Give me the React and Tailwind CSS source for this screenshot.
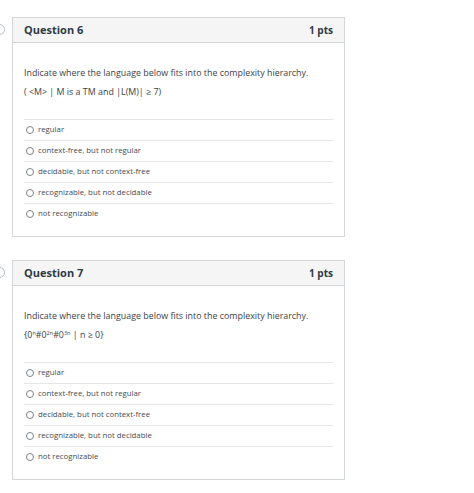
const options = [
  'regular',
  'context-free, but not regular',
  'decidable, but not context-free',
  'recognizable, but not decidable',
  'not recognizable',
]

function QuestionCard({ number, formula }) {
  return (
    <div className="relative">
      <span className="absolute -left-[18px] top-[7px] w-[11px] h-[11px] rounded-full border border-[#b8bec2] bg-white" />
      <div className="border border-[#d3d7da] bg-white">
        <div className="h-[25px] px-[11px] flex items-center justify-between bg-[#f5f5f5] border-b border-[#d3d7da]">
          <span className="text-[11px] font-bold text-[#2d3b45]">Question {number}</span>
          <span className="text-[10px] font-bold text-[#2d3b45]">1 pts</span>
        </div>
        <div className="px-[11px] pt-[24px] pb-[12px]">
          <p className="text-[8.9px] leading-[12px] text-[#3b4248]">
            Indicate where the language below fits into the complexity hierarchy.
          </p>
          <p className="mt-[7px] text-[8.9px] leading-[12px] text-[#3b4248]">{formula}</p>
          <div className="mt-[21px]">
            {options.map(opt => (
              <div key={opt} className="h-[21px] flex items-center gap-[4px] border-t border-[#e4e7e9] pl-[2px]">
                <span className="w-[8px] h-[8px] rounded-full border border-[#7b848a] bg-white" />
                <span className="text-[7.8px] text-[#444b50]">{opt}</span>
              </div>
            ))}
          </div>
        </div>
      </div>
    </div>
  )
}

export default function App() {
  return (
    <div className="w-[474px] h-[493px] bg-white overflow-hidden" style={{ fontFamily: '"Open Sans", sans-serif' }}>
      <div className="ml-[12px] pt-[17px] w-[333px] flex flex-col gap-[23px]">
        <QuestionCard number={6} formula={<>( &lt;M&gt; | M is a TM and |L(M)| ≥ 7)</>} />
        <QuestionCard
          number={7}
          formula={
            <>
              {'{'}0<sup className="text-[5.5px]">n</sup>#0<sup className="text-[5.5px]">2n</sup>#0<sup className="text-[5.5px]">3n</sup> | n ≥ 0{'}'}
            </>
          }
        />
      </div>
    </div>
  )
}
